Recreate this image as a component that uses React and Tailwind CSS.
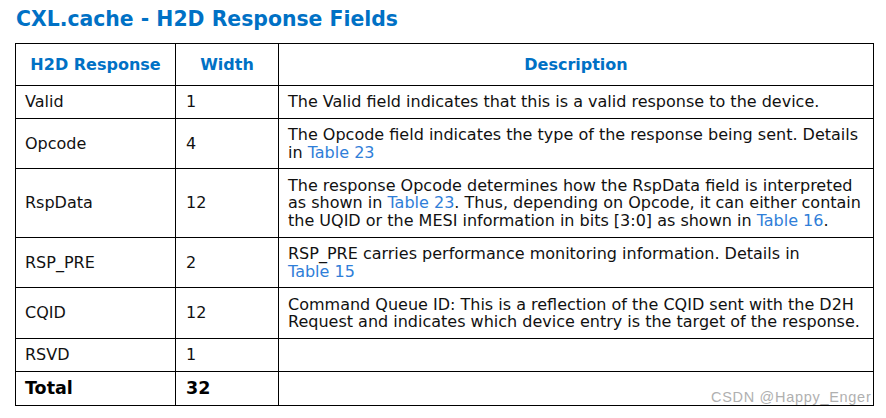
import React from 'react';

const rows = [
  { name: 'Valid', width: '1', h: 'h-[33px]', desc: <>The Valid field indicates that this is a valid response to the device.</> },
  {
    name: 'Opcode',
    width: '4',
    h: 'h-[50px]',
    desc: (
      <>
        The Opcode field indicates the type of the response being sent. Details in <Ref>Table 23</Ref>
      </>
    ),
  },
  {
    name: 'RspData',
    width: '12',
    h: 'h-[69px]',
    desc: (
      <>
        The response Opcode determines how the RspData field is interpreted as shown in <Ref>Table 23</Ref>. Thus,
        depending on Opcode, it can either contain the UQID or the MESI information in bits [3:0] as shown in{' '}
        <Ref>Table 16</Ref>.
      </>
    ),
  },
  {
    name: 'RSP_PRE',
    width: '2',
    h: 'h-[50px]',
    desc: (
      <>
        RSP_PRE carries performance monitoring information. Details in <Ref>Table 15</Ref>
      </>
    ),
  },
  {
    name: 'CQID',
    width: '12',
    h: 'h-[51px]',
    desc: <>Command Queue ID: This is a reflection of the CQID sent with the D2H Request and indicates which device entry is the target of the response.</>,
  },
  { name: 'RSVD', width: '1', h: 'h-[33px]', desc: null },
];

function Ref({ children }) {
  return <span className="text-[#2f7ed8] whitespace-nowrap">{children}</span>;
}

const App = () => {
  return (
    <div className="relative w-[886px] h-[418px] bg-white font-['DejaVu_Sans',Verdana,sans-serif] text-[#111]">
      <h1 className="pl-[16px] pt-[6px] h-[43px] text-[20.4px] font-bold text-[#0071c5] leading-[26px]">
        CXL.cache - H2D Response Fields
      </h1>
      <table className="ml-[15px] w-[859px] border-collapse table-fixed text-[16px] leading-[17.5px]">
        <colgroup>
          <col className="w-[160px]" />
          <col className="w-[103px]" />
          <col />
        </colgroup>
        <thead>
          <tr className="h-[42px]">
            <th className="border border-black text-center font-bold text-[#0071c5] text-[16px]">H2D Response</th>
            <th className="border border-black text-center font-bold text-[#0071c5] text-[16px]">Width</th>
            <th className="border border-black text-center font-bold text-[#0071c5] text-[16px]">Description</th>
          </tr>
        </thead>
        <tbody>
          {rows.map((r) => (
            <tr key={r.name} className={r.h}>
              <td className="border border-black pl-[9px] align-middle">{r.name}</td>
              <td className="border border-black pl-[10px] align-middle">{r.width}</td>
              <td className="border border-black pl-[9px] pr-[6px] align-middle">{r.desc}</td>
            </tr>
          ))}
          <tr className="h-[34px]">
            <td className="border border-black pl-[9px] align-middle font-bold text-[17.5px] text-black">Total</td>
            <td className="border border-black pl-[10px] align-middle font-bold text-[17.5px] text-black">32</td>
            <td className="border border-black"></td>
          </tr>
        </tbody>
      </table>
      <div className="absolute left-[711px] top-[387px] text-[14.5px] text-[#b0b0b0] font-['Liberation_Sans',Arial,sans-serif] tracking-[0.7px]">
        CSDN @Happy_Enger
      </div>
    </div>
  );
};

export default App;
